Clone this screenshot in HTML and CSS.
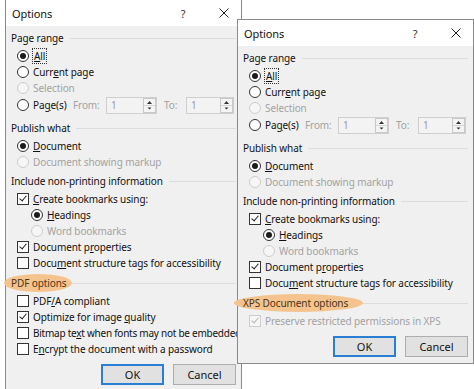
FILE: index.html
```html
<!DOCTYPE html>
<html lang="en">
<head>
  <meta charset="UTF-8" />
  <title>Options</title>
  <link rel="stylesheet" href="styles.css">
</head>
<body>
  <div class="desk">

    <!-- PDF dialog (back) -->
    <div class="dialog dialog-pdf">
      <div class="titlebar">
        <span class="title">Options</span>
        <span class="help">?</span>
        <span class="close">
          <svg width="10" height="10" viewBox="0 0 10 10"><path d="M0.5 0.5 L9.5 9.5 M9.5 0.5 L0.5 9.5" stroke="#222" stroke-width="1" fill="none"/></svg>
        </span>
      </div>
      <div class="content">
        <div class="section">
          <div class="group-head"><span>Page range</span></div>
          <div class="row"><span class="radio checked"></span><span class="focus"><u>A</u>ll</span></div>
          <div class="row"><span class="radio"></span><span>Curr<u>e</u>nt page</span></div>
          <div class="row disabled"><span class="radio"></span><span>Selection</span></div>
          <div class="row row-pages">
            <span class="radio"></span><span class="pages-label">Pa<u>g</u>e(s)</span>
            <span class="spin-label">From:</span>
            <span class="spin spin-from"><span class="spin-value">1</span><span class="spin-btns"><svg width="13" height="15" viewBox="0 0 13 15"><rect x="0.5" y="0.5" width="12" height="14" fill="#f4f4f4" stroke="#c9c9c9"/><path d="M1 7.5 H12" stroke="#d6d6d6"/><path d="M4 6 L6.5 3 L9 6 Z" fill="#333"/><path d="M4.5 9.5 L6.5 11.5 L8.5 9.5 Z" fill="#333"/></svg></span></span>
            <span class="spin-label spin-label-to">To:</span>
            <span class="spin spin-to"><span class="spin-value">1</span><span class="spin-btns"><svg width="13" height="15" viewBox="0 0 13 15"><rect x="0.5" y="0.5" width="12" height="14" fill="#f4f4f4" stroke="#c9c9c9"/><path d="M1 7.5 H12" stroke="#d6d6d6"/><path d="M4 6 L6.5 3 L9 6 Z" fill="#333"/><path d="M4.5 9.5 L6.5 11.5 L8.5 9.5 Z" fill="#333"/></svg></span></span>
          </div>
        </div>

        <div class="section section-publish">
          <div class="group-head"><span>Publish what</span></div>
          <div class="row"><span class="radio checked"></span><span><u>D</u>ocument</span></div>
          <div class="row disabled"><span class="radio"></span><span>Document showing markup</span></div>
        </div>

        <div class="section section-include">
          <div class="group-head"><span>Include non-printing information</span></div>
          <div class="row"><span class="check checked"></span><span><u>C</u>reate bookmarks using:</span></div>
          <div class="row nested"><span class="radio checked"></span><span><u>H</u>eadings</span></div>
          <div class="row nested disabled"><span class="radio"></span><span>Word bookmarks</span></div>
          <div class="row"><span class="check checked"></span><span>Document p<u>r</u>operties</span></div>
          <div class="row"><span class="check"></span><span>Docu<u>m</u>ent structure tags for accessibility</span></div>
        </div>

        <div class="section section-extra">
          <div class="group-head"><span class="marked">PDF options</span></div>
          <div class="row"><span class="check"></span><span>PDF<u>/</u>A compliant</span></div>
          <div class="row"><span class="check checked"></span><span>Optimize for image <u>q</u>uality</span></div>
          <div class="row row-long"><span class="check"></span><span>Bitmap te<u>x</u>t when fonts may not be embedded</span></div>
          <div class="row"><span class="check"></span><span>E<u>n</u>crypt the document with a password</span></div>
        </div>

        <div class="actions">
          <button class="btn btn-default">OK</button>
          <button class="btn">Cancel</button>
        </div>
      </div>
    </div>

    <!-- XPS dialog (front) -->
    <div class="dialog dialog-xps">
      <div class="titlebar">
        <span class="title">Options</span>
        <span class="help">?</span>
        <span class="close">
          <svg width="10" height="10" viewBox="0 0 10 10"><path d="M0.5 0.5 L9.5 9.5 M9.5 0.5 L0.5 9.5" stroke="#222" stroke-width="1" fill="none"/></svg>
        </span>
      </div>
      <div class="content">
        <div class="section">
          <div class="group-head"><span>Page range</span></div>
          <div class="row"><span class="radio checked"></span><span class="focus"><u>A</u>ll</span></div>
          <div class="row"><span class="radio"></span><span>Curr<u>e</u>nt page</span></div>
          <div class="row disabled"><span class="radio"></span><span>Selection</span></div>
          <div class="row row-pages">
            <span class="radio"></span><span class="pages-label">Pa<u>g</u>e(s)</span>
            <span class="spin-label">From:</span>
            <span class="spin spin-from"><span class="spin-value">1</span><span class="spin-btns"><svg width="13" height="15" viewBox="0 0 13 15"><rect x="0.5" y="0.5" width="12" height="14" fill="#f4f4f4" stroke="#c9c9c9"/><path d="M1 7.5 H12" stroke="#d6d6d6"/><path d="M4 6 L6.5 3 L9 6 Z" fill="#333"/><path d="M4.5 9.5 L6.5 11.5 L8.5 9.5 Z" fill="#333"/></svg></span></span>
            <span class="spin-label spin-label-to">To:</span>
            <span class="spin spin-to"><span class="spin-value">1</span><span class="spin-btns"><svg width="13" height="15" viewBox="0 0 13 15"><rect x="0.5" y="0.5" width="12" height="14" fill="#f4f4f4" stroke="#c9c9c9"/><path d="M1 7.5 H12" stroke="#d6d6d6"/><path d="M4 6 L6.5 3 L9 6 Z" fill="#333"/><path d="M4.5 9.5 L6.5 11.5 L8.5 9.5 Z" fill="#333"/></svg></span></span>
          </div>
        </div>

        <div class="section section-publish">
          <div class="group-head"><span>Publish what</span></div>
          <div class="row"><span class="radio checked"></span><span><u>D</u>ocument</span></div>
          <div class="row disabled"><span class="radio"></span><span>Document showing markup</span></div>
        </div>

        <div class="section section-include">
          <div class="group-head"><span>Include non-printing information</span></div>
          <div class="row"><span class="check checked"></span><span><u>C</u>reate bookmarks using:</span></div>
          <div class="row nested"><span class="radio checked"></span><span><u>H</u>eadings</span></div>
          <div class="row nested disabled"><span class="radio"></span><span>Word bookmarks</span></div>
          <div class="row"><span class="check checked"></span><span>Document p<u>r</u>operties</span></div>
          <div class="row"><span class="check"></span><span>Docu<u>m</u>ent structure tags for accessibility</span></div>
        </div>

        <div class="section section-extra">
          <div class="group-head"><span class="marked marked-wide">XPS Document options</span></div>
          <div class="row disabled"><span class="check checked"></span><span>Preserve restricted permissions in XPS</span></div>
        </div>

        <div class="actions">
          <button class="btn btn-default">OK</button>
          <button class="btn">Cancel</button>
        </div>
      </div>
    </div>

  </div>
</body>
</html>
```

FILE: styles.css
```css
body {
  margin: 0;
  background: #fff;
}

.desk {
  position: relative;
  width: 474px;
  height: 389px;
  overflow: hidden;
  background: #fff;
  font-family: "Noto Sans", "Open Sans", sans-serif;
  font-size: 10px;
  letter-spacing: -0.1px;
  color: #111;
}

/* windows on the desk */
.dialog {
  position: absolute;
  width: 237px;
  box-sizing: border-box;
  background: #f0f0f0;
  border: 1px solid #8a8a8a;
}

.dialog-pdf {
  left: 5px;
  top: -1px;
}

.dialog-xps {
  left: 237px;
  top: 19px;
}

.titlebar {
  display: flex;
  align-items: center;
  height: 26px;
  background: #fff;
  font-size: 11px;
}

.title {
  flex: 1;
  padding-left: 6px;
}

.help {
  width: 20px;
  margin-right: 14px;
  text-align: center;
  color: #333;
}

.close {
  width: 34px;
  display: flex;
  justify-content: center;
}

.close svg {
  display: block;
}

.content {
  padding: 4px 5px 6px 5px;
}

.group-head {
  display: flex;
  align-items: center;
  height: 16px;
  margin-bottom: 2px;
}

.group-head::after {
  content: "";
  flex: 1;
  height: 1px;
  margin-left: 6px;
  background: #dcdcdc;
}

.section-publish {
  margin-top: 6px;
}

.section-include {
  margin-top: 3px;
}

.section-extra {
  margin-top: 4px;
}

/* highlighter mark behind a heading */
.marked {
  position: relative;
  z-index: 0;
  color: #4a3416;
}

.marked::before {
  content: "";
  position: absolute;
  z-index: -1;
  left: -7px;
  right: -6px;
  top: -2px;
  bottom: -2px;
  border-radius: 50%;
  background: #f5c48e;
}

.marked-wide::before {
  left: -9px;
  right: -15px;
}

.row {
  display: flex;
  align-items: center;
  height: 16px;
  padding-left: 6px;
  white-space: nowrap;
}

.row.nested {
  padding-left: 20px;
}

.row.disabled {
  color: #a3a3a3;
}

.row-long {
  letter-spacing: -0.25px;
}

.radio,
.check {
  position: relative;
  flex: none;
  width: 12px;
  height: 12px;
  margin-right: 4px;
  box-sizing: border-box;
  border: 1px solid #333;
  background: #fff;
}

.radio {
  border-radius: 50%;
}

.radio.checked::after {
  content: "";
  position: absolute;
  left: 2px;
  top: 2px;
  width: 6px;
  height: 6px;
  border-radius: 50%;
  background: #1c1c1c;
}

.check.checked::after {
  content: "";
  position: absolute;
  left: 3px;
  top: 0px;
  width: 3px;
  height: 6px;
  border: solid #222;
  border-width: 0 1px 1px 0;
  transform: rotate(40deg);
}

.disabled .radio,
.disabled .check {
  border-color: #cdcdcd;
  background: #f6f6f6;
}

.disabled .check.checked::after {
  border-color: #b5b5b5;
}

.focus {
  outline: 1px dotted #333;
  outline-offset: 0;
  padding: 0 1px;
}

/* page-range spin boxes */
.row-pages {
  height: 18px;
}

.pages-label {
  width: 40px;
}

.spin-label {
  width: 33px;
  color: #a3a3a3;
}

.spin-label-to {
  width: 22px;
  margin-left: 7px;
}

.spin {
  display: flex;
  align-items: center;
  height: 17px;
  box-sizing: border-box;
  border: 1px solid #cfcfcf;
  background: #f3f3f3;
}

.spin-from {
  width: 51px;
}

.spin-to {
  width: 48px;
}

.spin-value {
  flex: 1;
  padding-left: 4px;
  color: #9a9a9a;
}

.spin-btns svg {
  display: block;
}

.actions {
  display: flex;
  justify-content: flex-end;
  gap: 9px;
  margin-top: 7px;
}

.btn {
  width: 63px;
  height: 21px;
  box-sizing: border-box;
  padding: 0;
  font: inherit;
  font-size: 11px;
  color: #111;
  background: #e1e1e1;
  border: 1px solid #adadad;
}

.btn-default {
  border: 2px solid #2a7fd4;
}
```
